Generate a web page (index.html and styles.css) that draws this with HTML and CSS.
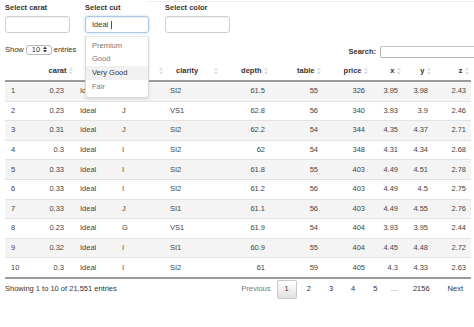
FILE: index.html
```html
<!DOCTYPE html>
<html>
<head>
<meta charset="utf-8">
<link rel="stylesheet" href="styles.css">
</head>
<body>
<div class="topline"></div>
<div class="page">
  <div class="filters">
    <div class="field">
      <label class="flabel">Select carat</label>
      <div class="finput"></div>
    </div>
    <div class="field">
      <label class="flabel">Select cut</label>
      <div class="select-wrap">
        <div class="finput focused"><span class="typed">Ideal</span><span class="caret"></span></div>
        <div class="dropdown">
          <div class="opt">Premium</div>
          <div class="opt">Good</div>
          <div class="opt active">Very Good</div>
          <div class="opt">Fair</div>
        </div>
      </div>
    </div>
    <div class="field">
      <label class="flabel">Select color</label>
      <div class="finput"></div>
    </div>
  </div>

  <div class="controls">
    <div class="length">
      <span>Show</span>
      <span class="lsel"><span>10</span><svg class="updown" width="4" height="7" viewBox="0 0 4 7"><path d="M0 3 L2 0.4 L4 3Z M0 4 L4 4 L2 6.6Z" fill="#333"/></svg></span>
      <span>entries</span>
    </div>
    <div class="search">
      <span class="slabel">Search:</span>
      <span class="sinput"></span>
    </div>
  </div>

  <table class="dt">
    <colgroup>
      <col class="c-idx"><col class="c-carat"><col class="c-cut"><col class="c-color"><col class="c-clarity"><col class="c-depth"><col class="c-table"><col class="c-price"><col class="c-x"><col class="c-y"><col class="c-z">
    </colgroup>
    <thead>
      <tr>
        <th></th>
        <th class="r"><div class="thi"><span>carat</span><svg class="sort" width="4" height="8" viewBox="0 0 4 8"><path d="M0 3.3 L2 0.6 L4 3.3Z M0 4.7 L4 4.7 L2 7.4Z"/></svg></div></th>
        <th class="l"><div class="thi"><span>cut</span><svg class="sort" width="4" height="8" viewBox="0 0 4 8"><path d="M0 3.3 L2 0.6 L4 3.3Z M0 4.7 L4 4.7 L2 7.4Z"/></svg></div></th>
        <th class="l"><div class="thi"><span>color</span><svg class="sort" width="4" height="8" viewBox="0 0 4 8"><path d="M0 3.3 L2 0.6 L4 3.3Z M0 4.7 L4 4.7 L2 7.4Z"/></svg></div></th>
        <th class="l"><div class="thi"><span>clarity</span><svg class="sort" width="4" height="8" viewBox="0 0 4 8"><path d="M0 3.3 L2 0.6 L4 3.3Z M0 4.7 L4 4.7 L2 7.4Z"/></svg></div></th>
        <th class="r"><div class="thi"><span>depth</span><svg class="sort" width="4" height="8" viewBox="0 0 4 8"><path d="M0 3.3 L2 0.6 L4 3.3Z M0 4.7 L4 4.7 L2 7.4Z"/></svg></div></th>
        <th class="r"><div class="thi"><span>table</span><svg class="sort" width="4" height="8" viewBox="0 0 4 8"><path d="M0 3.3 L2 0.6 L4 3.3Z M0 4.7 L4 4.7 L2 7.4Z"/></svg></div></th>
        <th class="r"><div class="thi"><span>price</span><svg class="sort" width="4" height="8" viewBox="0 0 4 8"><path d="M0 3.3 L2 0.6 L4 3.3Z M0 4.7 L4 4.7 L2 7.4Z"/></svg></div></th>
        <th class="r"><div class="thi"><span>x</span><svg class="sort" width="4" height="8" viewBox="0 0 4 8"><path d="M0 3.3 L2 0.6 L4 3.3Z M0 4.7 L4 4.7 L2 7.4Z"/></svg></div></th>
        <th class="r"><div class="thi"><span>y</span><svg class="sort" width="4" height="8" viewBox="0 0 4 8"><path d="M0 3.3 L2 0.6 L4 3.3Z M0 4.7 L4 4.7 L2 7.4Z"/></svg></div></th>
        <th class="r"><div class="thi"><span>z</span><svg class="sort" width="4" height="8" viewBox="0 0 4 8"><path d="M0 3.3 L2 0.6 L4 3.3Z M0 4.7 L4 4.7 L2 7.4Z"/></svg></div></th>
      </tr>
    </thead>
    <tbody>
      <tr><td class="idx">1</td><td class="n carat">0.23</td><td>Ideal</td><td>E</td><td>SI2</td><td class="n">61.5</td><td class="n">55</td><td class="n">326</td><td class="n">3.95</td><td class="n">3.98</td><td class="n">2.43</td></tr>
      <tr><td class="idx">2</td><td class="n carat">0.23</td><td>Ideal</td><td>J</td><td>VS1</td><td class="n">62.8</td><td class="n">56</td><td class="n">340</td><td class="n">3.93</td><td class="n">3.9</td><td class="n">2.46</td></tr>
      <tr><td class="idx">3</td><td class="n carat">0.31</td><td>Ideal</td><td>J</td><td>SI2</td><td class="n">62.2</td><td class="n">54</td><td class="n">344</td><td class="n">4.35</td><td class="n">4.37</td><td class="n">2.71</td></tr>
      <tr><td class="idx">4</td><td class="n carat">0.3</td><td>Ideal</td><td>I</td><td>SI2</td><td class="n">62</td><td class="n">54</td><td class="n">348</td><td class="n">4.31</td><td class="n">4.34</td><td class="n">2.68</td></tr>
      <tr><td class="idx">5</td><td class="n carat">0.33</td><td>Ideal</td><td>I</td><td>SI2</td><td class="n">61.8</td><td class="n">55</td><td class="n">403</td><td class="n">4.49</td><td class="n">4.51</td><td class="n">2.78</td></tr>
      <tr><td class="idx">6</td><td class="n carat">0.33</td><td>Ideal</td><td>I</td><td>SI2</td><td class="n">61.2</td><td class="n">56</td><td class="n">403</td><td class="n">4.49</td><td class="n">4.5</td><td class="n">2.75</td></tr>
      <tr><td class="idx">7</td><td class="n carat">0.33</td><td>Ideal</td><td>J</td><td>SI1</td><td class="n">61.1</td><td class="n">56</td><td class="n">403</td><td class="n">4.49</td><td class="n">4.55</td><td class="n">2.76</td></tr>
      <tr><td class="idx">8</td><td class="n carat">0.23</td><td>Ideal</td><td>G</td><td>VS1</td><td class="n">61.9</td><td class="n">54</td><td class="n">404</td><td class="n">3.93</td><td class="n">3.95</td><td class="n">2.44</td></tr>
      <tr><td class="idx">9</td><td class="n carat">0.32</td><td>Ideal</td><td>I</td><td>SI1</td><td class="n">60.9</td><td class="n">55</td><td class="n">404</td><td class="n">4.45</td><td class="n">4.48</td><td class="n">2.72</td></tr>
      <tr><td class="idx">10</td><td class="n carat">0.3</td><td>Ideal</td><td>I</td><td>SI2</td><td class="n">61</td><td class="n">59</td><td class="n">405</td><td class="n">4.3</td><td class="n">4.33</td><td class="n">2.63</td></tr>
    </tbody>
  </table>

  <div class="footer">
    <div class="info">Showing 1 to 10 of 21,551 entries</div>
    <div class="paginate">
      <span class="pbtn disabled prev">Previous</span>
      <span class="pbtn current">1</span>
      <span class="pbtn">2</span>
      <span class="pbtn">3</span>
      <span class="pbtn">4</span>
      <span class="pbtn">5</span>
      <span class="ellipsis">…</span>
      <span class="pbtn">2156</span>
      <span class="pbtn">Next</span>
    </div>
  </div>
</div>
</body>
</html>
```

FILE: styles.css
```css
html, body {
  margin: 0;
  padding: 0;
  overflow: hidden;
  background: #fff;
}
body {
  font-family: "Liberation Sans", Arial, Helvetica, sans-serif;
  font-size: 7.5px;
  color: #333;
}
.topline {
  height: 1px;
  margin: 1px 0 0 148px;
  background: #efefef;
}
.page {
  width: 466px;
  padding: 1px 0 0 5px;
}

/* filters */
.filters {
  display: flex;
  gap: 15px;
}
.field {
  width: 65px;
  display: flex;
  flex-direction: column;
}
.flabel {
  font-weight: bold;
  line-height: 10px;
  margin-bottom: 3px;
  color: #333;
  white-space: nowrap;
}
.select-wrap {
  position: relative;
  width: 64px;
}
.finput {
  box-sizing: border-box;
  height: 17px;
  border: 1px solid #cfcfcf;
  border-radius: 3px;
  box-shadow: inset 0 1px 1px rgba(0,0,0,0.06);
  background: #fff;
  display: flex;
  align-items: center;
  padding-left: 6px;
}
.finput.focused {
  border-color: #a9c6e4;
  box-shadow: inset 0 1px 1px rgba(0,0,0,0.06), 0 0 3px rgba(102,175,233,0.45);
}
.typed {
  color: #333;
  line-height: 10px;
}
.caret {
  width: 1px;
  height: 8px;
  background: #555;
  margin-left: 3px;
}
.dropdown {
  position: absolute;
  top: calc(100% + 3px);
  left: 0;
  width: 64px;
  box-sizing: border-box;
  padding: 1.5px 0 2.5px;
  background: #fff;
  border: 1px solid #dadada;
  border-top-color: #eaeaea;
  border-radius: 0 0 3px 3px;
  box-shadow: 0 1px 3px rgba(0,0,0,0.12);
  z-index: 5;
}
.opt {
  height: 13.9px;
  line-height: 13.9px;
  padding-left: 6px;
  color: #777;
}
.opt.active {
  background: #f1f1f1;
  color: #333;
}

/* controls */
.controls {
  margin-top: 11px;
  display: flex;
  justify-content: space-between;
  align-items: flex-start;
}
.length {
  display: flex;
  align-items: center;
  height: 11px;
  gap: 2px;
}
.lsel {
  box-sizing: border-box;
  height: 10px;
  width: 26px;
  border: 1px solid #b8b8b8;
  border-radius: 3px;
  display: flex;
  align-items: center;
  justify-content: space-between;
  padding: 0 4px 0 5px;
  background: #fff;
  color: #333;
}
.updown { display: block; }
.search {
  display: flex;
  align-items: center;
  margin-top: 1.5px;
  margin-right: -10px;
}
.slabel {
  font-weight: bold;
  line-height: 12px;
  margin-right: 4px;
}
.sinput {
  box-sizing: border-box;
  display: block;
  width: 101px;
  height: 12px;
  border: 1px solid #b0b0b0;
  border-top-color: #c8c8c8;
  border-radius: 2px;
  background: #fff;
}

/* table */
.dt {
  margin-top: 3.5px;
  width: 466px;
  table-layout: fixed;
  border-collapse: collapse;
  border-spacing: 0;
}
.c-idx { width: 35px; }
.c-carat { width: 35px; }
.c-cut { width: 42px; }
.c-color { width: 48px; }
.c-clarity { width: 55px; }
.c-depth { width: 50px; }
.c-table { width: 53px; }
.c-price { width: 47px; }
.c-x { width: 33px; }
.c-y { width: 30px; }
.c-z { width: 38px; }

.dt th {
  font-weight: bold;
  color: #333;
  line-height: 10px;
  height: 19px;
  box-sizing: border-box;
  padding: 4.5px 2px 4.5px 11px;
  border-bottom: 2px solid #9b9b9b;
  white-space: nowrap;
}
.thi {
  display: flex;
  align-items: center;
  gap: 2.5px;
}
.dt th.r .thi { justify-content: flex-end; }
.dt th.l .thi { justify-content: space-between; }
.sort {
  display: block;
  fill: #dcdcdc;
  flex: none;
}
.dt td {
  line-height: 10px;
  padding: 4.3px 5px;
  color: #444;
  border-top: 1px solid #e3e3e3;
  white-space: nowrap;
  overflow: hidden;
}
.dt tbody tr:first-child td { border-top: none; }
.dt tbody tr:nth-child(odd) td { background: #f4f4f4; }
.dt tbody tr:last-child td { border-bottom: 2px solid #9b9b9b; }
.dt td.n { text-align: right; }
.dt td.carat { padding-right: 11px; }
.dt td.idx { padding-left: 6px; }

/* footer */
.footer {
  margin-top: 1px;
  display: flex;
  justify-content: space-between;
  align-items: center;
}
.info {
  color: #333;
  line-height: 10px;
}
.paginate {
  display: flex;
  align-items: center;
}
.pbtn {
  box-sizing: border-box;
  display: block;
  line-height: 10px;
  padding: 3.5px 7px;
  margin-left: 2px;
  border: 1px solid transparent;
  border-radius: 2px;
  color: #333;
  text-align: center;
}
.pbtn.disabled { color: #777; }
.pbtn.prev { padding-right: 3px; }
.pbtn.current {
  border-color: #c9c9c9;
  background: linear-gradient(#ffffff, #e0e0e0);
  color: #333;
}
.ellipsis {
  display: block;
  padding: 0 5px;
  color: #555;
  line-height: 10px;
}
```
